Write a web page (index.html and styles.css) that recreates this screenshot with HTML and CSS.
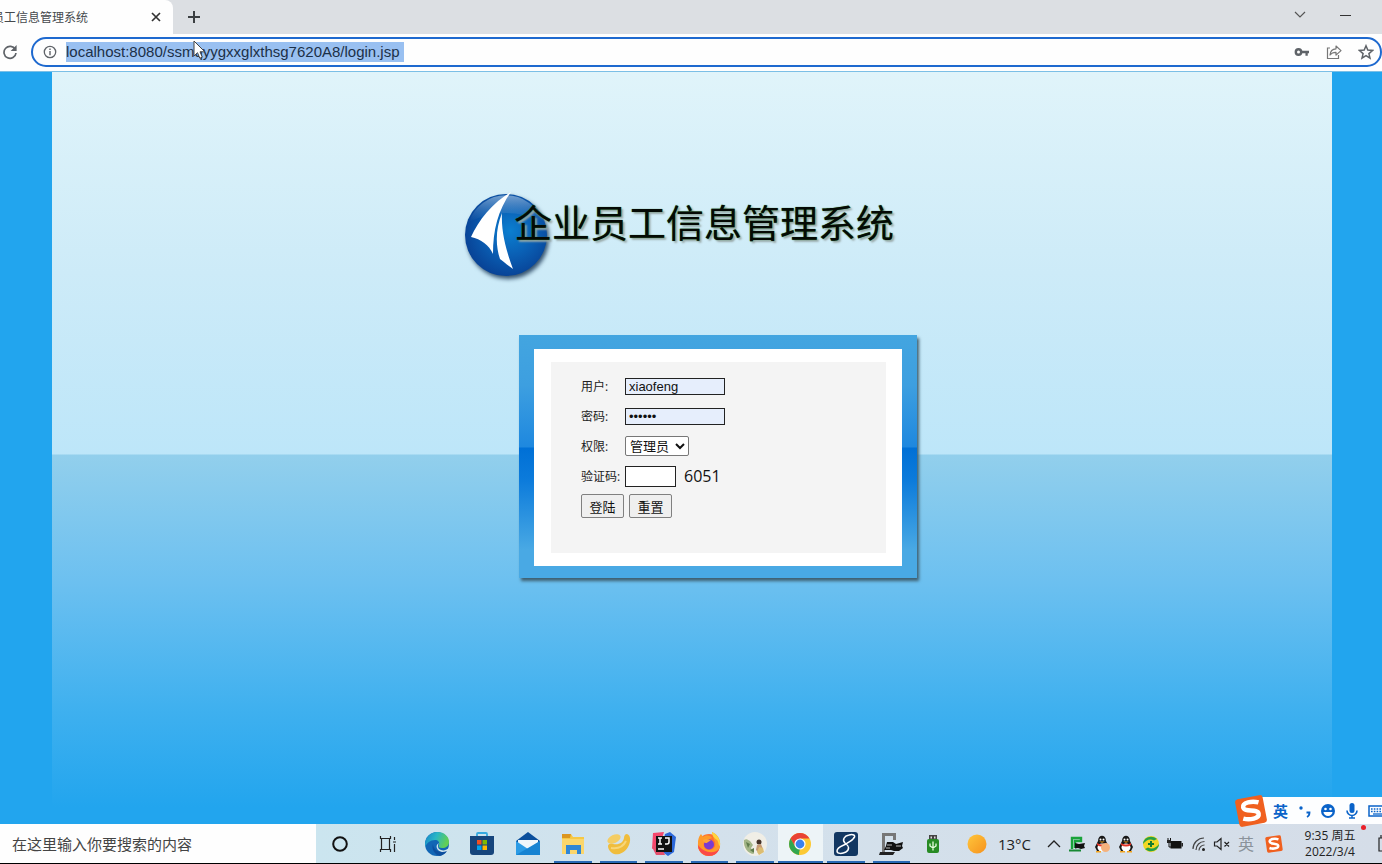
FILE: index.html
```html
<!DOCTYPE html>
<html lang="zh-CN">
<head>
<meta charset="utf-8">
<title>企业员工信息管理系统</title>
<link rel="stylesheet" href="styles.css">
</head>
<body>
<header class="tabstrip">
  <div class="tab">
    <span class="tab-title">员工信息管理系统</span>
    <button class="icon-btn tab-close" aria-label="关闭"><svg width="10" height="10" viewBox="0 0 10 10"><path d="M1 1l8 8M9 1l-8 8" stroke="#333" stroke-width="1.7"/></svg></button>
  </div>
  <button class="icon-btn new-tab" aria-label="新标签页"><svg width="12" height="12" viewBox="0 0 12 12"><path d="M6 0v12M0 6h12" stroke="#3c4043" stroke-width="2"/></svg></button>
  <div class="window-controls">
    <button class="icon-btn" aria-label="搜索标签页"><svg width="12" height="8" viewBox="0 0 12 8"><path d="M1 1l5 5 5-5" fill="none" stroke="#555" stroke-width="1.2"/></svg></button>
    <button class="icon-btn" aria-label="最小化"><svg width="11" height="8" viewBox="0 0 11 8"><path d="M0 4.500h11" stroke="#333" stroke-width="1"/></svg></button>
  </div>
</header>
<div class="toolbar">
  <button class="icon-btn reload" aria-label="刷新"><svg width="16" height="16" viewBox="0 0 16 16"><path d="M13.300 5.500A6 6 0 1 0 14 9" fill="none" stroke="#5f6368" stroke-width="1.700"/><path d="M14.600 1v6h-6z" fill="#5f6368"/></svg></button>
  <div class="omnibox">
    <svg width="14" height="14" viewBox="0 0 14 14"><circle cx="7" cy="7" r="5.700" fill="none" stroke="#5f6368" stroke-width="1.300"/><path d="M7 6v4.200M7 3.600v1.300" stroke="#5f6368" stroke-width="1.400"/></svg>
    <input class="url" aria-label="地址" value="localhost:8080/ssmqyygxxglxthsg7620A8/login.jsp">
    <div class="omni-actions">
      <button class="icon-btn" aria-label="密码"><svg width="16" height="16" viewBox="0 0 16 16"><circle cx="4.500" cy="8" r="2.700" fill="none" stroke="#5f6368" stroke-width="2.400"/><path d="M7 8h8M12.600 8v3.800" stroke="#5f6368" stroke-width="2.300"/></svg></button>
      <button class="icon-btn" aria-label="分享"><svg width="16" height="16" viewBox="0 0 16 16"><path d="M4 4H1.500v10.500h11V11" fill="none" stroke="#777" stroke-width="1.200"/><path d="M4 11c.3-4 2.400-6 6-6.200V2l5 4.600-5 4.500V8.300C7.500 8.200 5.500 9 4 11z" fill="none" stroke="#777" stroke-width="1.200" stroke-linejoin="round"/></svg></button>
      <button class="icon-btn" aria-label="收藏"><svg width="16" height="16" viewBox="0 0 16 16"><path d="M8 1.800l1.800 4.300 4.700.4-3.600 3.100 1.100 4.600L8 11.700l-4 2.500 1.100-4.600L1.500 6.500l4.700-.4z" fill="none" stroke="#5f6368" stroke-width="1.500"/></svg></button>
    </div>
  </div>
  <svg class="cursor" width="13" height="20" viewBox="0 0 13 20"><path d="M1 1v15l3.500-3.300 2.300 5.500 2.500-1-2.300-5.400h4.800z" fill="#fff" stroke="#444"/></svg>
</div>

<main class="page">
  <div class="backdrop">
    <div class="content">
      <div class="brand">
        <svg class="brand-logo" width="90" height="90" viewBox="0 0 90 90">
          <defs>
            <radialGradient id="ball" cx=".55" cy=".45" r=".6"><stop offset="0" stop-color="#0b7fd0"/><stop offset=".5" stop-color="#0a5fb4"/><stop offset="1" stop-color="#083f92"/></radialGradient>
            <linearGradient id="shine" x1="0" y1="0" x2="0" y2="1"><stop offset="0" stop-color="#8fb4da" stop-opacity=".8"/><stop offset="1" stop-color="#4d88c4" stop-opacity="0"/></linearGradient>
          </defs>
          <circle cx="42" cy="43" r="41" fill="url(#ball)"/>
          <path d="M5 30a39 39 0 0 1 74 0Q42 12 5 30z" fill="url(#shine)"/>
          <path d="M47 0C29 10 14 29 7 45c10 2 18 8 22 17C29 38 34 18 47 0z" fill="#fff"/>
          <path d="M38 21c-6 15-7 31-2 46 5 4 9 7 13 10C42 58 37 40 38 21z" fill="#fff"/>
        </svg>
        <h1 class="brand-title">企业员工信息管理系统</h1>
      </div>
      <div class="card">
        <form class="login">
          <div class="row"><label for="user">用户:</label><input class="box filled" id="user" type="text" value="xiaofeng"></div>
          <div class="row"><label for="pwd">密码:</label><input class="box filled" id="pwd" type="password" value="123456"></div>
          <div class="row"><label for="role">权限:</label><select id="role" class="role"><option>管理员</option></select></div>
          <div class="row"><label for="code">验证码:</label><input class="box code" id="code" type="text"><span class="captcha">6051</span></div>
          <div class="row actions"><button class="btn" type="submit">登陆</button><button class="btn" type="reset">重置</button></div>
        </form>
      </div>
    </div>
  </div>
  <div class="ime">
    <svg width="32" height="32" viewBox="0 0 32 32"><g transform="rotate(-11 16 16)"><rect x="2" y="2" width="28" height="28" rx="3" fill="#f0601f"/><path d="M25 9C19 6 9 6 9 11s14 4 14 9-10 5-16 2" fill="none" stroke="#fff" stroke-width="4.500"/></g></svg>
    <span class="ime-lang">英</span>
    <svg width="14" height="16" viewBox="0 0 14 16"><circle cx="3" cy="5" r="1.700" fill="#0a63c9"/><path d="M8.500 9.500h3c0 2-.6 3.500-2.500 4.500" fill="none" stroke="#0a63c9" stroke-width="1.800"/></svg>
    <svg width="16" height="16" viewBox="0 0 16 16"><circle cx="8" cy="8" r="7" fill="#0a63c9"/><circle cx="5.500" cy="6" r="1.300" fill="#fff"/><circle cx="10.500" cy="6" r="1.300" fill="#fff"/><path d="M3.500 9h9a4.500 4 0 0 1-9 0z" fill="#fff"/></svg>
    <svg width="16" height="16" viewBox="0 0 16 16"><rect x="5.500" y="0" width="5" height="10" rx="2.500" fill="#0a63c9"/><path d="M3 7.500a5 5 0 0 0 10 0M8 12.500V15M5 15h6" fill="none" stroke="#0a63c9" stroke-width="1.600"/></svg>
    <svg width="14" height="16" viewBox="0 0 14 16"><rect x="1" y="3" width="18" height="10" fill="none" stroke="#0a63c9" stroke-width="1.500"/><path d="M3 6h14M3 8.500h14" stroke="#0a63c9" stroke-width="1.400" stroke-dasharray="1.600 1.200"/><path d="M5 11h10" stroke="#0a63c9" stroke-width="1.300"/></svg>
  </div>
</main>

<footer class="taskbar">
  <input class="search" type="text" aria-label="搜索" placeholder="在这里输入你要搜索的内容">
  <button class="icon-btn sys" aria-label="Cortana"><svg width="18" height="18" viewBox="0 0 18 18"><circle cx="9" cy="9" r="6.800" fill="none" stroke="#111" stroke-width="2"/></svg></button>
  <button class="icon-btn sys" aria-label="任务视图"><svg width="18" height="18" viewBox="0 0 18 18"><path d="M1.500 1v2.500h10V1M1.500 17v-2.500h10V17M2.500 3.500v11M10.500 3.500v11M15.500 2v3M15.500 9v8M14 7h3" fill="none" stroke="#222" stroke-width="1.200"/></svg></button>
  <nav class="apps">
    <button class="app" aria-label="Edge"><svg width="26" height="26" viewBox="0 0 26 26"><defs><linearGradient id="edge" x1="0" y1="0" x2="1" y2=".3"><stop offset="0" stop-color="#1683c9"/><stop offset=".5" stop-color="#28b6c6"/><stop offset="1" stop-color="#62cf55"/></linearGradient></defs><circle cx="13" cy="13" r="12" fill="#1266b5"/><path d="M1 13C1 6 7 1 13 1c8 0 12 5 12 10 0 4-3 6-7 6-3 0-4-1-3-3 1-3-1-5-4-5-5 0-8 3-10 7z" fill="url(#edge)"/><path d="M15 12c-2 3-1 6 2 7 3 1 5 0 8-2l1 2-3 2c-3 1-7 0-9-2-2-3-2-5 1-7z" fill="#d2e4ee"/><path d="M9 13c-2 5 2 11 7 12 3-1 5-2 7-5-7 3-14-1-14-7z" fill="#0d4e9e"/></svg></button>
    <button class="app" aria-label="Microsoft Store"><svg width="26" height="26" viewBox="0 0 26 26"><path d="M8 6V3q0-1 1-1h8q1 0 1 1v3" fill="none" stroke="#36a9df" stroke-width="1.800"/><path d="M1 5h24v16q0 3-3 3H4q-3 0-3-3z" fill="#16457c"/><path d="M8 9h4.500v4.500H8z" fill="#f25022"/><path d="M13.500 9H18v4.500h-4.500z" fill="#7fba00"/><path d="M8 14.500h4.500V19H8z" fill="#00a4ef"/><path d="M13.500 14.500H18V19h-4.500z" fill="#ffb900"/></svg></button>
    <button class="app" aria-label="邮件"><svg width="26" height="26" viewBox="0 0 26 26"><path d="M1 10L13 1l12 9v5H1z" fill="#0b4f9c"/><path d="M3 9h20v9H3z" fill="#eef6fb"/><path d="M1 10l12 8 12-8v14H1z" fill="#2b9be5"/><path d="M1 24l24-14v14z" fill="#1683d2"/></svg></button>
    <button class="app running" aria-label="文件资源管理器"><svg width="26" height="26" viewBox="0 0 26 26"><path d="M2 3h9l2 3h11v17H2z" fill="#f6c844"/><path d="M2 3h9l-1 4H2z" fill="#dc9620"/><path d="M2 8h22v15H2z" fill="#fbd66b"/><path d="M6 23v-9h15v9h-4v-4h-7v4z" fill="#2f86d5"/></svg></button>
    <button class="app running" aria-label="Navicat"><svg width="26" height="26" viewBox="0 0 26 26"><path d="M2 15c0-2 3-3 5-2 6 1 10-1 11-6 0-2 1-4 3-4 4 1 4 8 1 13-4 7-12 9-16 6-3-2-4-5-4-7z" fill="#f0bd3c"/><ellipse cx="8" cy="8" rx="7" ry="4" transform="rotate(-25 8 8)" fill="#f4cd64"/><path d="M5 17c6 1 12-1 15-7" fill="none" stroke="#f8d678" stroke-width="2"/></svg></button>
    <button class="app running" aria-label="IntelliJ IDEA"><svg width="26" height="26" viewBox="0 0 26 26"><path d="M2 2l11-1-4 13-8 4z" fill="#f5476c"/><path d="M14 3l5-2 6 5-2 15-6 4-7-5z" fill="#2b67d8"/><path d="M1 16l8-4 5 12H5z" fill="#e5506e"/><path d="M5 5h16v16H5z" fill="#111"/><path d="M7 7h4M9 7v6M7 13h4M14 7h4v4q0 2-2 2h-2M7 18h6" fill="none" stroke="#fff" stroke-width="1.500"/></svg></button>
    <button class="app running" aria-label="Firefox"><svg width="26" height="26" viewBox="0 0 26 26"><circle cx="13" cy="14" r="11" fill="#ff7130"/><path d="M2 12C2 7 4 4 5 3l2 3c3-2 7-2 9 1l-7 3c-3 3-1 9 4 9 6 0 8-6 5-10l-2-8c5 2 9 7 8 14-1 6-6 10-11 10C6 25 1 19 2 12z" fill="#ff9a29"/><path d="M16 1c5 2 9 8 8 14-2-1-1-4-3-6-3-2-5-4-5-8z" fill="#ffd53d"/><path d="M2 14c0 7 6 11 11 11 5 0 9-3 10-7-6 6-16 3-21-4z" fill="#fb4a48"/><circle cx="13" cy="13.500" r="5" fill="#7a3bd0"/><path d="M7 9c3-2 6-1 8 1-3 0-3 2-5 2-2 0-3-1-3-3z" fill="#ffa436"/></svg></button>
    <button class="app running" aria-label="照片"><svg width="26" height="26" viewBox="0 0 26 26"><circle cx="13" cy="13" r="12" fill="#f0eee6"/><path d="M2 9c3-2 4 0 6 1l3 4-2 3 3 6c-6 0-11-7-10-14z" fill="#a3b587"/><path d="M4 11l4 2-2 4zM8 19l4-2v5z" fill="#5f7c4b"/><circle cx="17" cy="11" r="2.500" fill="#453329"/><path d="M15 14l4-1 2 5-4 4-3-3z" fill="#c79b75"/><path d="M17 16l4 1 1 4-5 3-2-3z" fill="#dcbd72"/></svg></button>
    <button class="app running active" aria-label="Chrome"><svg width="26" height="26" viewBox="0 0 26 26"><circle cx="13" cy="13" r="11" fill="#fcc934"/><path d="M3.500 7.500A11 11 0 0 1 22.500 7.500H13L8.200 15.700z" fill="#e94235"/><path d="M3.500 7.500l4.800 8.300L13 18.500l-1 5.400A11 11 0 0 1 3.500 7.500z" fill="#31a650"/><path d="M12 23.900l5.800-8.200L13 18z" fill="#fcc934"/><circle cx="13" cy="13" r="5.600" fill="#fff"/><circle cx="13" cy="13" r="4.400" fill="#3b82ee"/></svg></button>
    <button class="app running" aria-label="笔记"><svg width="26" height="26" viewBox="0 0 26 26"><rect x="1" y="1" width="24" height="24" rx="3" fill="#123762"/><path d="M21 7c2-3-1-4-5-3-5 1-7 5-4 8 4 3 5 6 1 9-4 2-9 2-9-1 0-4 5-5 9-7 4-3 8-4 8-7" fill="none" stroke="#fff" stroke-width="1.500"/></svg></button>
    <button class="app running" aria-label="录屏"><svg width="26" height="26" viewBox="0 0 26 26"><path d="M3 2h15v7h-3V5H7v16H4V2z" fill="#777"/><path d="M2 21h15l-2 3H1z" fill="#222"/><path d="M9 11h6l3 2 7-2-1 4 1 2-4 3h-5l-3-1H6l2-4z" fill="#111"/><path d="M9 14h5M8 17h4M18 15h5" stroke="#bbb"/></svg></button>
  </nav>
  <button class="icon-btn usb" aria-label="USB"><svg width="14" height="20" viewBox="0 0 14 20"><path d="M3 1h8v5H3z" fill="#444"/><path d="M4.500 2.500h1.500v2H4.500zM8 2.500h1.500v2H8z" fill="#ddd"/><rect x="1" y="5" width="12" height="14" rx="2" fill="#278b24"/><path d="M7 7.500v9M4 9.500v2.500l3 2 3-2V9.500" fill="none" stroke="#e9ffe0" stroke-width="1.300"/></svg></button>
  <div class="weather">
    <svg width="20" height="20" viewBox="0 0 20 20"><defs><linearGradient id="sun" x1="0" y1="0" x2="1" y2="1"><stop offset="0" stop-color="#ffc63b"/><stop offset="1" stop-color="#f6921e"/></linearGradient></defs><circle cx="10" cy="10" r="9.500" fill="url(#sun)"/></svg>
    <span>13°C</span>
  </div>
  <div class="tray">
    <svg width="16" height="16" viewBox="0 0 16 16"><path d="M2 11l6-6 6 6" fill="none" stroke="#222" stroke-width="1.300"/></svg>
    <svg width="18" height="16" viewBox="0 0 18 16"><path d="M4 13V2h9v3H7v7" fill="none" stroke="#18a33a" stroke-width="2.400"/><path d="M1 14.500h12" stroke="#178833" stroke-width="2"/><path d="M7 7l4 1 6-1-1 3 1 2-4 1-3-1-3 .5z" fill="#111"/></svg>
    <svg width="18" height="18" viewBox="0 0 18 18"><path d="M2 12l3-6c0-7 8-7 8 0l3 6-2 4H4z" fill="#181818"/><ellipse cx="9" cy="12.500" rx="4.500" ry="4" fill="#fff"/><path d="M4 8q5 3 10 0v2q-5 3-10 0z" fill="#e33426"/><circle cx="7.500" cy="4.500" r="1" fill="#fff"/><circle cx="10.500" cy="4.500" r="1" fill="#fff"/><path d="M6 6.500h6l-3 1.300zM3 16h5v1.500H3z" fill="#f5a51c"/><circle cx="12.500" cy="12.500" r="4.500" fill="#f5b27d"/></svg>
    <svg width="18" height="18" viewBox="0 0 18 18"><path d="M2 12l3-6c0-7 8-7 8 0l3 6-2 4H4z" fill="#181818"/><ellipse cx="9" cy="12.500" rx="4.500" ry="4" fill="#fff"/><path d="M4 8q5 3 10 0v2q-5 3-10 0z" fill="#e33426"/><circle cx="7.500" cy="4.500" r="1" fill="#fff"/><circle cx="10.500" cy="4.500" r="1" fill="#fff"/><path d="M6 6.500h6l-3 1.300zM3 16h5v1.500H3zM10 16h5v1.500h-5z" fill="#f5a51c"/></svg>
    <svg width="18" height="18" viewBox="0 0 18 18"><circle cx="9" cy="9" r="8" fill="#f3d722"/><path d="M1 9C1 3 9-1 15 4L12 5.500C8 3 4 5 1 9zM17 9c0 6-8 10-14 5l3-1.500c4 2.500 8 .5 11-3.500z" fill="#27a146"/><path d="M9 6v6M6 9h6" stroke="#167b2f" stroke-width="2"/></svg>
    <svg width="18" height="14" viewBox="0 0 18 14"><rect x="4.500" y="4" width="11" height="7.500" fill="#111"/><path d="M15.500 6h1.500v3.500h-1.500zM1 3h4v3H1z" fill="#222"/><path d="M2 1v2M4.500 1v2M3 6v4h2" fill="none" stroke="#111"/></svg>
    <svg width="16" height="16" viewBox="0 0 16 16"><path d="M2 13A11 11 0 0 1 13 2M5 14a8.500 8.500 0 0 1 8.500-8.500M8 14.500A5.500 5.500 0 0 1 13.500 9" fill="none" stroke="#444" stroke-width="1.200"/><circle cx="12.500" cy="13.500" r="1.500" fill="#222"/></svg>
    <svg width="18" height="14" viewBox="0 0 18 14"><path d="M1.500 5h2.500l4-3.500v11L4 9H1.500zM11.500 5l4.500 4.500M16 5l-4.500 4.500" fill="none" stroke="#222" stroke-width="1.200"/></svg>
    <span class="tray-lang">英</span>
  </div>
  <svg class="sogou" width="18" height="18" viewBox="0 0 32 32"><g transform="rotate(-8 16 16)"><rect x="2" y="2" width="28" height="28" rx="3" fill="#f0601f"/><path d="M25 9C19 6 9 6 9 11s14 4 14 9-10 5-16 2" fill="none" stroke="#fff" stroke-width="4.500"/></g></svg>
  <div class="clock"><span>9:35 周五</span><span>2022/3/4</span><i class="dot"></i></div>
  <svg class="edge-icon" width="4" height="20" viewBox="0 0 4 20"><path d="M5 4H1v13h4M3 1v3" fill="none" stroke="#222" stroke-width="1.200"/></svg>
</footer>
</body>
</html>
```
FILE: styles.css
```css
* { box-sizing: border-box; }

body {
  margin: 0;
  height: 100vh;
  display: flex;
  flex-direction: column;
  overflow: hidden;
  font-family: "Open Sans", "Noto Sans CJK SC", sans-serif;
  color: #222;
}

svg { display: block; flex: none; }

.icon-btn, .app {
  border: 0;
  padding: 0;
  background: none;
  display: flex;
  align-items: center;
  justify-content: center;
}

/* Browser chrome */
.tabstrip {
  display: flex;
  align-items: center;
  height: 34px;
  background: #dcdfe3;
}
.tab {
  display: flex;
  align-items: center;
  justify-content: space-between;
  width: 173px;
  height: 34px;
  padding-right: 12px;
  background: #fefefe;
  border-top-right-radius: 8px;
}
.tab-title {
  margin-left: -8px;
  font-size: 12px;
  color: #45494d;
  white-space: nowrap;
}
.new-tab { margin-left: 15px; }
.window-controls {
  display: flex;
  gap: 34px;
  margin-left: auto;
  padding: 0 31px 4px 0;
}
.toolbar {
  position: relative;
  display: flex;
  align-items: center;
  gap: 13px;
  height: 38px;
  padding: 0 0 2px 2px;
  background: #fefefe;
  border-bottom: 1px solid #7bbfe6;
}
.omnibox {
  flex: 1;
  display: flex;
  align-items: center;
  height: 30px;
  padding: 0 6px 0 10px;
  border: 2px solid #1e69cf;
  border-radius: 15px;
}
.url {
  width: 338px;
  height: 20px;
  margin-left: 9px;
  padding: 0;
  border: 0;
  background: #99c0f1;
  font: 15px "Liberation Sans", sans-serif;
  color: #1c3048;
}
.omni-actions {
  display: flex;
  gap: 16px;
  margin-left: auto;
}
.cursor {
  position: absolute;
  left: 193px;
  top: 6px;
}

/* Login page */
.page {
  position: relative;
  flex: 1;
  min-height: 0;
  padding: 0 50px 0 52px;
  background: #22a5ee;
}
.backdrop {
  height: 100%;
  background: linear-gradient(#e0f4fa 0, #cdebf8 200px, #bde6f9 382px, #92cfec 383px, #6cc0f0 510px, #3eb0ef 640px, #22a5ee 735px);
}
.content {
  width: 456px;
  margin: 0 auto;
  padding-top: 120px;
}
.brand {
  display: flex;
  align-items: flex-start;
  height: 143px;
}
.brand-logo { filter: drop-shadow(2px 3px 2px #34526e); }
.brand-title {
  z-index: 1;
  margin: 5px 0 0 -40px;
  font-size: 38px;
  line-height: 50px;
  font-weight: 400;
  color: #050a05;
  white-space: nowrap;
  text-shadow: 0 0 1px #1f7a1f, 2px 2px 2px #99a9a9;
}
.card {
  width: 398px;
  margin-left: 55px;
  padding: 14px 15px 12px;
  background: linear-gradient(#43a5e0 0, #3d9fe0 50px, #1e88df 112px, #0070d6 113px, #0c7bdb 145px, #49a9e4 215px);
  box-shadow: 2px 3px 3px #3e5f70;
}
.login {
  height: 217px;
  padding: 9px 30px;
  border: solid #fff;
  border-width: 13px 16px 13px 17px;
  background: #f4f4f4;
}
.row {
  display: flex;
  align-items: center;
  height: 30px;
}
.row label {
  width: 44px;
  font-size: 12px;
  white-space: nowrap;
}
.box {
  width: 100px;
  height: 17px;
  padding: 0 3px;
  border: 1px solid #222;
  background: #fff;
  font: 13px "Liberation Sans", sans-serif;
  color: #111;
}
.filled { background: #e6eefc; }
.code { width: 51px; height: 21px; }
.captcha { margin-left: 8px; font-size: 16px; color: #111; }
.role {
  width: 64px;
  height: 20px;
  padding: 0;
  border: 1px solid #777;
  border-radius: 2px;
  background: #fff;
  font: 13px "Liberation Sans", "Noto Sans CJK SC", sans-serif;
  color: #111;
}
.actions { gap: 5px; }
.btn {
  width: 43px;
  height: 24px;
  padding: 0;
  border: 1px solid #808080;
  border-radius: 2px;
  background: #efefef;
  font: 13px "Liberation Sans", "Noto Sans CJK SC", sans-serif;
  color: #111;
}

/* Floating input-method bar */
.ime {
  position: absolute;
  right: 0;
  bottom: 0;
  display: flex;
  align-items: center;
  gap: 8px;
  height: 27px;
  background: linear-gradient(90deg, transparent 16px, #fdfeff 16px);
}
.ime-lang {
  margin-right: 2px;
  margin-left: -2px;
  font-size: 15px;
  font-weight: 700;
  color: #0a63c9;
}

/* Taskbar */
.taskbar {
  display: flex;
  align-items: center;
  height: 40px;
  background: linear-gradient(90deg, #cbe5ef 316px, #d3e1ec 700px, #d5dde8);
  border-bottom: 1px solid #000;
}
.search {
  width: 316px;
  height: 100%;
  padding: 0 12px;
  border: 0;
  background: #fefefe;
  font: 15px "Noto Sans CJK SC", sans-serif;
}
.search::placeholder { color: #444; }
.sys { width: 48px; height: 100%; }
.apps {
  display: flex;
  width: 500px;
  height: 100%;
  margin-left: 2px;
}
.app {
  position: relative;
  flex: 1;
  height: 100%;
}
.running::after {
  content: "";
  position: absolute;
  left: 4px;
  right: 4px;
  bottom: 0;
  height: 2px;
  background: #2868b4;
}
.active { background: #edf4f7; }
.active::after { left: 0; right: 0; }
.usb { width: 38px; height: 100%; }
.weather {
  display: flex;
  align-items: center;
  gap: 11px;
  margin-left: auto;
  font-size: 15px;
}
.tray {
  display: flex;
  align-items: center;
  justify-content: space-between;
  width: 208px;
  margin-left: 15px;
}
.tray-lang {
  font-size: 16px;
  line-height: 20px;
  color: #8a929a;
}
.sogou { margin-left: 11px; }
.clock {
  position: relative;
  width: 72px;
  margin-left: 11px;
  display: flex;
  flex-direction: column;
  align-items: center;
  font-size: 12px;
  line-height: 16px;
  white-space: nowrap;
}
.dot {
  position: absolute;
  right: 0;
  top: -3px;
  width: 5px;
  height: 5px;
  border-radius: 50%;
  background: #e9202a;
}
.edge-icon { margin-left: 12px; }
```
